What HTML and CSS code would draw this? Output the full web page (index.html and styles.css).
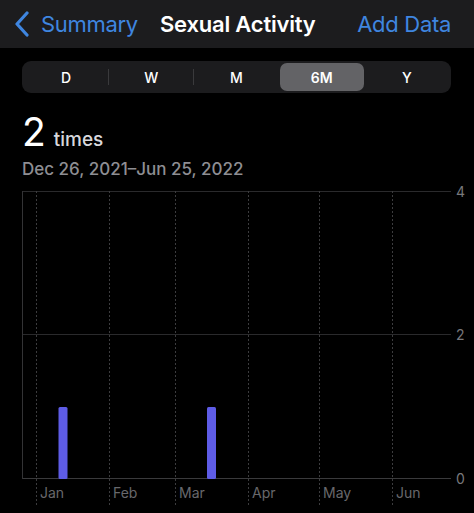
FILE: index.html
```html
<!DOCTYPE html>
<html>
<head>
<meta charset="utf-8">
<link rel="stylesheet" href="styles.css">
</head>
<body>
<header class="nav">
  <a class="back">
    <svg class="chev" width="16" height="26" viewBox="0 0 16 26"><path d="M13 2 L3 13 L13 24" fill="none" stroke="#3f86e0" stroke-width="3.2" stroke-linecap="round" stroke-linejoin="round"/></svg>
    <span>Summary</span>
  </a>
  <h1 class="title">Sexual Activity</h1>
  <a class="add">Add Data</a>
</header>
<main class="content">
  <div class="seg">
    <div class="seg-item">D</div>
    <div class="seg-sep"></div>
    <div class="seg-item">W</div>
    <div class="seg-sep"></div>
    <div class="seg-item">M</div>
    <div class="seg-sep hidden"></div>
    <div class="seg-item active">6M</div>
    <div class="seg-sep hidden"></div>
    <div class="seg-item">Y</div>
  </div>
  <div class="total"><span class="num">2</span><span class="unit">times</span></div>
  <div class="range">Dec 26, 2021–Jun 25, 2022</div>
</main>
<svg class="chart" width="474" height="332" viewBox="0 0 474 332">
  <g stroke="#2a2a2c" stroke-width="1">
    <line x1="22" y1="9.5" x2="451" y2="9.5"/>
    <line x1="22" y1="152.5" x2="451" y2="152.5"/>
    <line x1="22" y1="296.5" x2="451" y2="296.5" stroke="#3a3a3c"/>
    <line x1="22.5" y1="9" x2="22.5" y2="297" stroke="#333335"/>
  </g>
  <g stroke="#3c3c3e" stroke-width="1" stroke-dasharray="2 2">
    <line x1="36.5" y1="9" x2="36.5" y2="323"/>
    <line x1="109.5" y1="9" x2="109.5" y2="323"/>
    <line x1="175.5" y1="9" x2="175.5" y2="323"/>
    <line x1="248.5" y1="9" x2="248.5" y2="323"/>
    <line x1="319.5" y1="9" x2="319.5" y2="323"/>
    <line x1="392.5" y1="9" x2="392.5" y2="323"/>
  </g>
  <g fill="#5e5ce6">
    <rect x="58.5" y="225" width="9" height="72" rx="1.5"/>
    <rect x="207" y="225" width="9" height="72" rx="1.5"/>
  </g>
  <g class="ylab">
    <text x="456" y="15">4</text>
    <text x="456" y="158">2</text>
    <text x="456" y="302">0</text>
  </g>
  <g class="xlab">
    <text x="40" y="316">Jan</text>
    <text x="113" y="316">Feb</text>
    <text x="179" y="316">Mar</text>
    <text x="252" y="316">Apr</text>
    <text x="323" y="316">May</text>
    <text x="396" y="316">Jun</text>
  </g>
</svg>
</body>
</html>
```

FILE: styles.css
```css
html, body {
  margin: 0;
  padding: 0;
  background: #000;
  width: 474px;
  height: 513px;
  overflow: hidden;
  font-family: Inter, "Liberation Sans", Arial, sans-serif;
}

.nav {
  height: 48px;
  background: #1c1c1e;
  display: flex;
  align-items: center;
  padding: 0 23px 0 14px;
  box-sizing: border-box;
}

.back {
  display: flex;
  align-items: center;
  gap: 11px;
  color: #3f86e0;
  font-size: 22px;
  letter-spacing: -0.3px;
}

.chev {
  display: block;
}

.title {
  margin: 0 0 0 22px;
  font-size: 22px;
  font-weight: 600;
  color: #fff;
  letter-spacing: -0.2px;
  flex: 1;
}

.add {
  color: #3f86e0;
  font-size: 22px;
  letter-spacing: -0.3px;
}

.content {
  padding: 13px 23px 0 22px;
}

.seg {
  height: 32px;
  background: #1c1c1e;
  border-radius: 9px;
  display: flex;
  align-items: center;
  padding: 0 2px;
}

.seg-item {
  flex: 1;
  height: 28px;
  display: flex;
  align-items: center;
  justify-content: center;
  color: #fff;
  font-size: 14px;
  font-weight: 500;
  border-radius: 7px;
}

.seg-item.active {
  background: #636366;
  font-weight: 600;
}

.seg-sep {
  width: 1px;
  height: 16px;
  background: #3a3a3c;
}

.seg-sep.hidden {
  background: transparent;
}

.total {
  margin-top: 19px;
  display: flex;
  align-items: baseline;
  gap: 8px;
  color: #fff;
  height: 40px;
}

.num {
  font-size: 39px;
  font-weight: 400;
  line-height: 40px;
}

.unit {
  font-size: 19px;
  color: #d8d8dc;
  font-weight: 500;
}

.range {
  margin-top: 7px;
  font-size: 17px;
  font-weight: 500;
  color: #8e8e93;
}

.chart {
  display: block;
  margin-top: 3px;
  overflow: visible;
}

.ylab text {
  fill: #78787c;
  font-size: 14px;
  font-family: Inter, "Liberation Sans", Arial, sans-serif;
}

.xlab text {
  fill: #68686c;
  font-size: 14px;
  font-family: Inter, "Liberation Sans", Arial, sans-serif;
}
```
